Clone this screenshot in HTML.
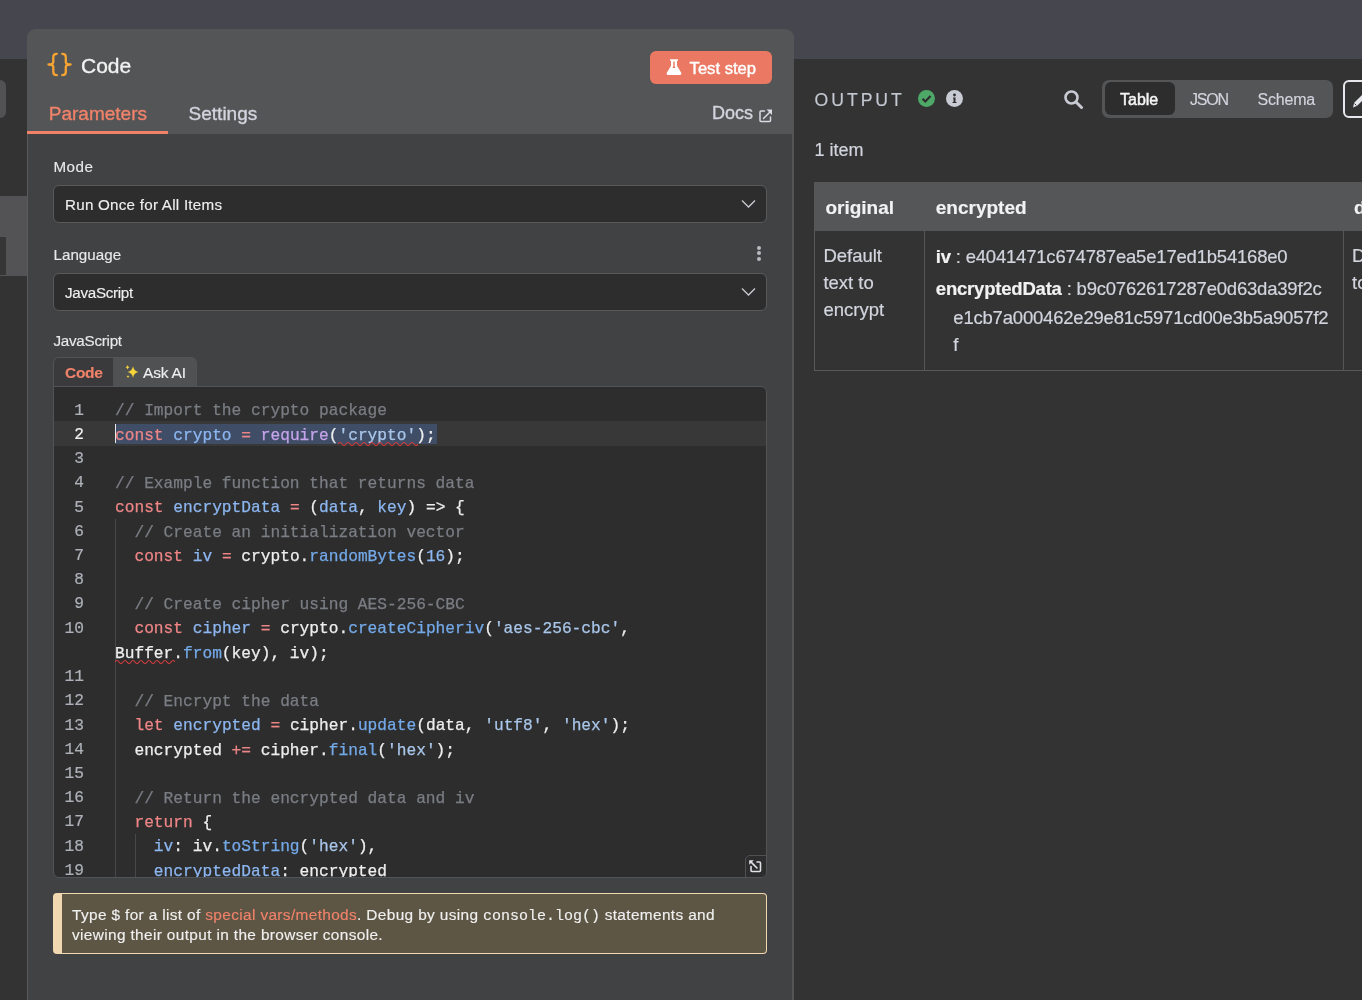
<!DOCTYPE html>
<html><head><meta charset="utf-8">
<style>
*{box-sizing:border-box;margin:0;padding:0}
html,body{width:1362px;height:1000px;overflow:hidden;background:#2e2e2e;font-family:"Liberation Sans",sans-serif;color:#e6e6e6;position:relative}
.a{position:absolute;white-space:nowrap;-webkit-text-stroke:0.15px currentColor}
</style></head><body>
<div id="root" style="position:absolute;left:0;top:0;width:1362px;height:1000px;will-change:transform"><div class="a" style="left:0px;top:0px;width:1362px;height:59px;background:#46464f;"></div>
<div class="a" style="left:0px;top:59px;width:27px;height:941px;background:#333333;"></div>
<div class="a" style="left:-10px;top:80px;width:16px;height:38px;background:#525254;border-radius:6px"></div>
<div class="a" style="left:0px;top:196px;width:27px;height:80px;background:#535355;"></div>
<div class="a" style="left:0px;top:237px;width:6px;height:38px;background:#363637;"></div>
<div class="a" style="left:794px;top:59px;width:568px;height:941px;background:#333333;"></div>
<div class="a" style="left:27px;top:29px;width:767px;height:990px;background:#414244;border-radius:9px 9px 0 0;border-left:1px solid #5a5b5d;border-right:2px solid #545557"></div>
<div class="a" style="left:27px;top:29px;width:767px;height:105px;background:#545557;border-radius:9px 9px 0 0"></div>
<svg class="a" style="left:44px;top:48px" width="32" height="32" viewBox="0 0 32 32"><path d="M12.8 5.8 C10 5.8 9.3 7 9.3 9 L9.3 14 C9.3 15.5 8 16.5 4.5 16.5 C8 16.5 9.3 17.5 9.3 19 L9.3 24 C9.3 26 10 27.2 12.8 27.2 M18.3 5.8 C21.1 5.8 21.8 7 21.8 9 L21.8 14 C21.8 15.5 23.1 16.5 26.6 16.5 C23.1 16.5 21.8 17.5 21.8 19 L21.8 24 C21.8 26 21.1 27.2 18.3 27.2" fill="none" stroke="#f7a432" stroke-width="2.3" stroke-linecap="round" stroke-linejoin="round"/></svg>
<div class="a" style="left:81px;top:51.42px;font-family:'Liberation Sans',sans-serif;font-size:21px;line-height:29px;color:#f2f2f2;font-weight:400;-webkit-text-stroke:0.2px currentColor;-webkit-text-stroke:0.35px currentColor">Code</div>
<div class="a" style="left:650px;top:51px;width:122px;height:33px;background:#ea7862;border-radius:6px"></div>
<svg class="a" style="left:666px;top:59px" width="16" height="17" viewBox="0 0 16 17"><path fill-rule="evenodd" d="M4 0.2 H12 V1.8 H11 V6.8 L15.2 13.8 C15.8 15 15.2 16 13.9 16 H2.1 C0.8 16 0.2 15 0.8 13.8 L5 6.8 V1.8 H4 Z M7.3 2.6 V7.6 L6.4 9 H9.6 L8.7 7.6 V2.6 Z" fill="#ffffff"/></svg>
<div class="a" style="left:689.6px;top:56.55px;font-family:'Liberation Sans',sans-serif;font-size:16.6px;line-height:23px;color:#ffffff;font-weight:400;-webkit-text-stroke:0.4px currentColor">Test step</div>
<div class="a" style="left:48.8px;top:99.52px;font-family:'Liberation Sans',sans-serif;font-size:19px;line-height:27px;color:#f0826a;font-weight:400;-webkit-text-stroke:0.2px currentColor;-webkit-text-stroke:0.35px currentColor">Parameters</div>
<div class="a" style="left:27px;top:131px;width:141px;height:3px;background:#f0826a;"></div>
<div class="a" style="left:188.6px;top:99.52px;font-family:'Liberation Sans',sans-serif;font-size:19px;line-height:27px;color:#d2d5de;font-weight:400;-webkit-text-stroke:0.2px currentColor;-webkit-text-stroke:0.35px currentColor">Settings</div>
<div class="a" style="left:712px;top:101.16px;font-family:'Liberation Sans',sans-serif;font-size:18px;line-height:25px;color:#d2d5de;font-weight:400;-webkit-text-stroke:0.2px currentColor;-webkit-text-stroke:0.35px currentColor">Docs</div>
<svg class="a" style="left:758px;top:108px" width="15" height="15" viewBox="0 0 15 15"><path d="M6.5 3 H3 Q2 3 2 4 V12.5 Q2 13.5 3 13.5 H11.5 Q12.5 13.5 12.5 12.5 V9" fill="none" stroke="#d8dbe3" stroke-width="1.5" stroke-linecap="round"/><path d="M5.5 10.5 L12.5 3.5" stroke="#d8dbe3" stroke-width="1.5" stroke-linecap="round"/><path d="M8.5 1.5 H14 V7 Z" fill="#d8dbe3"/></svg>
<div class="a" style="left:53.5px;top:155.63px;font-family:'Liberation Sans',sans-serif;font-size:15.2px;line-height:21px;color:#e8e8e8;font-weight:400;letter-spacing:0.45px">Mode</div>
<div class="a" style="left:53px;top:185px;width:714px;height:38px;background:#2d2d2e;border:1px solid #58595b;border-radius:6px"></div>
<div class="a" style="left:65px;top:193.63px;font-family:'Liberation Sans',sans-serif;font-size:15.2px;line-height:21px;color:#eeeeee;font-weight:400;letter-spacing:0.24px">Run Once for All Items</div>
<svg class="a" style="left:740px;top:198px" width="17" height="12" viewBox="0 0 17 12"><path d="M2 2.5 L8.5 9 L15 2.5" fill="none" stroke="#c8cad0" stroke-width="1.3"/></svg>
<div class="a" style="left:53.5px;top:243.93px;font-family:'Liberation Sans',sans-serif;font-size:15.2px;line-height:21px;color:#e8e8e8;font-weight:400;">Language</div>
<div class="a" style="left:757px;top:245.5px;width:4.4px;height:4.4px;background:#b8bac0;border-radius:50%"></div>
<div class="a" style="left:757px;top:251.0px;width:4.4px;height:4.4px;background:#b8bac0;border-radius:50%"></div>
<div class="a" style="left:757px;top:256.5px;width:4.4px;height:4.4px;background:#b8bac0;border-radius:50%"></div>
<div class="a" style="left:53px;top:273px;width:714px;height:38px;background:#2d2d2e;border:1px solid #58595b;border-radius:6px"></div>
<div class="a" style="left:65px;top:282.13px;font-family:'Liberation Sans',sans-serif;font-size:15.2px;line-height:21px;color:#eeeeee;font-weight:400;letter-spacing:-0.3px">JavaScript</div>
<svg class="a" style="left:740px;top:286px" width="17" height="12" viewBox="0 0 17 12"><path d="M2 2.5 L8.5 9 L15 2.5" fill="none" stroke="#c8cad0" stroke-width="1.3"/></svg>
<div class="a" style="left:53.5px;top:330.43px;font-family:'Liberation Sans',sans-serif;font-size:15.2px;line-height:21px;color:#e8e8e8;font-weight:400;letter-spacing:-0.26px">JavaScript</div>
<div class="a" style="left:53px;top:357px;width:144px;height:31px;background:#505153;border:1px solid #525355;border-bottom:none;border-radius:6px 6px 0 0"></div>
<div class="a" style="left:54px;top:358px;width:59px;height:29px;background:#3a3a3c;border-radius:5px 0 0 0"></div>
<div class="a" style="left:65px;top:362.23px;font-family:'Liberation Sans',sans-serif;font-size:15.5px;line-height:22px;color:#f0826a;font-weight:700;letter-spacing:-0.3px">Code</div>
<svg class="a" style="left:124px;top:364px" width="16" height="16" viewBox="0 0 16 16"><path d="M9 2 Q9.6 7 14.5 8 Q9.6 9 9 14 Q8.4 9 3.5 8 Q8.4 7 9 2Z" fill="#f5d33a"/><path d="M3.5 1 Q3.8 3 5.5 3.3 Q3.8 3.6 3.5 5.5 Q3.2 3.6 1.5 3.3 Q3.2 3 3.5 1Z" fill="#f5d33a"/><path d="M4 11 Q4.2 12.4 5.5 12.6 Q4.2 12.8 4 14.2 Q3.8 12.8 2.5 12.6 Q3.8 12.4 4 11Z" fill="#f5d33a"/></svg>
<div class="a" style="left:143px;top:362.23px;font-family:'Liberation Sans',sans-serif;font-size:15.5px;line-height:22px;color:#eeeeee;font-weight:400;letter-spacing:-0.2px">Ask AI</div>
<div class="a" style="left:53px;top:386px;width:714px;height:492px;background:#2d2d2e;border:1px solid #535456;border-radius:0 6px 6px 6px;overflow:hidden"></div>
<div class="a" style="left:54px;top:387px;width:712px;height:490px;overflow:hidden;border-radius:0 5px 5px 5px">
<div class="a" style="left:0px;top:34px;width:712px;height:25px;background:#383839;"></div>
<div class="a" style="left:61px;top:36.5px;width:322px;height:20.5px;background:#3f4d66;"></div>
<div class="a" style="left:60.5px;top:132px;width:1.5px;height:500px;background:#48484a;"></div>
<div class="a" style="left:80.5px;top:447px;width:1.5px;height:60px;background:#48484a;"></div>
<div class="a" style="left:20.28px;top:11.68px;font-family:'Liberation Mono',monospace;font-size:16.2px;line-height:24px;color:#aeb1b8;font-weight:400;-webkit-text-stroke:0.2px currentColor">1</div>
<div class="a" style="left:61px;top:12.48px;font-family:'Liberation Mono',monospace;font-size:16.2px;line-height:24px;color:#eeeeee;font-weight:400;white-space:pre;-webkit-text-stroke:0.25px currentColor"><span style="color:#7a7d83">// Import the crypto package</span></div>
<div class="a" style="left:20.28px;top:35.90px;font-family:'Liberation Mono',monospace;font-size:16.2px;line-height:24px;color:#f2f2f2;font-weight:400;-webkit-text-stroke:0.2px currentColor">2</div>
<div class="a" style="left:61px;top:36.70px;font-family:'Liberation Mono',monospace;font-size:16.2px;line-height:24px;color:#eeeeee;font-weight:400;white-space:pre;-webkit-text-stroke:0.25px currentColor"><span style="color:#ee8586">const</span><span style="color:#eeeeee"> </span><span style="color:#8cb6f0">crypto</span><span style="color:#eeeeee"> </span><span style="color:#ee8586">=</span><span style="color:#eeeeee"> </span><span style="color:#c5a3ea">require</span><span style="color:#eeeeee">(</span><span style="color:#a9c6ea">&#x27;crypto&#x27;</span><span style="color:#eeeeee">);</span></div>
<div class="a" style="left:20.28px;top:60.12px;font-family:'Liberation Mono',monospace;font-size:16.2px;line-height:24px;color:#aeb1b8;font-weight:400;-webkit-text-stroke:0.2px currentColor">3</div>
<div class="a" style="left:20.28px;top:84.34px;font-family:'Liberation Mono',monospace;font-size:16.2px;line-height:24px;color:#aeb1b8;font-weight:400;-webkit-text-stroke:0.2px currentColor">4</div>
<div class="a" style="left:61px;top:85.14px;font-family:'Liberation Mono',monospace;font-size:16.2px;line-height:24px;color:#eeeeee;font-weight:400;white-space:pre;-webkit-text-stroke:0.25px currentColor"><span style="color:#7a7d83">// Example function that returns data</span></div>
<div class="a" style="left:20.28px;top:108.56px;font-family:'Liberation Mono',monospace;font-size:16.2px;line-height:24px;color:#aeb1b8;font-weight:400;-webkit-text-stroke:0.2px currentColor">5</div>
<div class="a" style="left:61px;top:109.36px;font-family:'Liberation Mono',monospace;font-size:16.2px;line-height:24px;color:#eeeeee;font-weight:400;white-space:pre;-webkit-text-stroke:0.25px currentColor"><span style="color:#ee8586">const</span><span style="color:#eeeeee"> </span><span style="color:#8cb6f0">encryptData</span><span style="color:#eeeeee"> </span><span style="color:#ee8586">=</span><span style="color:#eeeeee"> (</span><span style="color:#8cb6f0">data</span><span style="color:#eeeeee">, </span><span style="color:#8cb6f0">key</span><span style="color:#eeeeee">) =&gt; {</span></div>
<div class="a" style="left:20.28px;top:132.78px;font-family:'Liberation Mono',monospace;font-size:16.2px;line-height:24px;color:#aeb1b8;font-weight:400;-webkit-text-stroke:0.2px currentColor">6</div>
<div class="a" style="left:61px;top:133.58px;font-family:'Liberation Mono',monospace;font-size:16.2px;line-height:24px;color:#eeeeee;font-weight:400;white-space:pre;-webkit-text-stroke:0.25px currentColor"><span style="color:#eeeeee">  </span><span style="color:#7a7d83">// Create an initialization vector</span></div>
<div class="a" style="left:20.28px;top:157.00px;font-family:'Liberation Mono',monospace;font-size:16.2px;line-height:24px;color:#aeb1b8;font-weight:400;-webkit-text-stroke:0.2px currentColor">7</div>
<div class="a" style="left:61px;top:157.80px;font-family:'Liberation Mono',monospace;font-size:16.2px;line-height:24px;color:#eeeeee;font-weight:400;white-space:pre;-webkit-text-stroke:0.25px currentColor"><span style="color:#eeeeee">  </span><span style="color:#ee8586">const</span><span style="color:#eeeeee"> </span><span style="color:#8cb6f0">iv</span><span style="color:#eeeeee"> </span><span style="color:#ee8586">=</span><span style="color:#eeeeee"> crypto.</span><span style="color:#74a9e8">randomBytes</span><span style="color:#eeeeee">(</span><span style="color:#8cb6f0">16</span><span style="color:#eeeeee">);</span></div>
<div class="a" style="left:20.28px;top:181.22px;font-family:'Liberation Mono',monospace;font-size:16.2px;line-height:24px;color:#aeb1b8;font-weight:400;-webkit-text-stroke:0.2px currentColor">8</div>
<div class="a" style="left:20.28px;top:205.44px;font-family:'Liberation Mono',monospace;font-size:16.2px;line-height:24px;color:#aeb1b8;font-weight:400;-webkit-text-stroke:0.2px currentColor">9</div>
<div class="a" style="left:61px;top:206.24px;font-family:'Liberation Mono',monospace;font-size:16.2px;line-height:24px;color:#eeeeee;font-weight:400;white-space:pre;-webkit-text-stroke:0.25px currentColor"><span style="color:#eeeeee">  </span><span style="color:#7a7d83">// Create cipher using AES-256-CBC</span></div>
<div class="a" style="left:10.560000000000002px;top:229.66px;font-family:'Liberation Mono',monospace;font-size:16.2px;line-height:24px;color:#aeb1b8;font-weight:400;-webkit-text-stroke:0.2px currentColor">10</div>
<div class="a" style="left:61px;top:230.46px;font-family:'Liberation Mono',monospace;font-size:16.2px;line-height:24px;color:#eeeeee;font-weight:400;white-space:pre;-webkit-text-stroke:0.25px currentColor"><span style="color:#eeeeee">  </span><span style="color:#ee8586">const</span><span style="color:#eeeeee"> </span><span style="color:#8cb6f0">cipher</span><span style="color:#eeeeee"> </span><span style="color:#ee8586">=</span><span style="color:#eeeeee"> crypto.</span><span style="color:#74a9e8">createCipheriv</span><span style="color:#eeeeee">(</span><span style="color:#a9c6ea">&#x27;aes-256-cbc&#x27;</span><span style="color:#eeeeee">,</span></div>
<div class="a" style="left:61px;top:254.68px;font-family:'Liberation Mono',monospace;font-size:16.2px;line-height:24px;color:#eeeeee;font-weight:400;white-space:pre;-webkit-text-stroke:0.25px currentColor"><span style="color:#eeeeee">Buffer.</span><span style="color:#74a9e8">from</span><span style="color:#eeeeee">(key), iv);</span></div>
<div class="a" style="left:10.560000000000002px;top:278.10px;font-family:'Liberation Mono',monospace;font-size:16.2px;line-height:24px;color:#aeb1b8;font-weight:400;-webkit-text-stroke:0.2px currentColor">11</div>
<div class="a" style="left:10.560000000000002px;top:302.32px;font-family:'Liberation Mono',monospace;font-size:16.2px;line-height:24px;color:#aeb1b8;font-weight:400;-webkit-text-stroke:0.2px currentColor">12</div>
<div class="a" style="left:61px;top:303.12px;font-family:'Liberation Mono',monospace;font-size:16.2px;line-height:24px;color:#eeeeee;font-weight:400;white-space:pre;-webkit-text-stroke:0.25px currentColor"><span style="color:#eeeeee">  </span><span style="color:#7a7d83">// Encrypt the data</span></div>
<div class="a" style="left:10.560000000000002px;top:326.54px;font-family:'Liberation Mono',monospace;font-size:16.2px;line-height:24px;color:#aeb1b8;font-weight:400;-webkit-text-stroke:0.2px currentColor">13</div>
<div class="a" style="left:61px;top:327.34px;font-family:'Liberation Mono',monospace;font-size:16.2px;line-height:24px;color:#eeeeee;font-weight:400;white-space:pre;-webkit-text-stroke:0.25px currentColor"><span style="color:#eeeeee">  </span><span style="color:#ee8586">let</span><span style="color:#eeeeee"> </span><span style="color:#8cb6f0">encrypted</span><span style="color:#eeeeee"> </span><span style="color:#ee8586">=</span><span style="color:#eeeeee"> cipher.</span><span style="color:#74a9e8">update</span><span style="color:#eeeeee">(data, </span><span style="color:#a9c6ea">&#x27;utf8&#x27;</span><span style="color:#eeeeee">, </span><span style="color:#a9c6ea">&#x27;hex&#x27;</span><span style="color:#eeeeee">);</span></div>
<div class="a" style="left:10.560000000000002px;top:350.76px;font-family:'Liberation Mono',monospace;font-size:16.2px;line-height:24px;color:#aeb1b8;font-weight:400;-webkit-text-stroke:0.2px currentColor">14</div>
<div class="a" style="left:61px;top:351.56px;font-family:'Liberation Mono',monospace;font-size:16.2px;line-height:24px;color:#eeeeee;font-weight:400;white-space:pre;-webkit-text-stroke:0.25px currentColor"><span style="color:#eeeeee">  encrypted </span><span style="color:#ee8586">+=</span><span style="color:#eeeeee"> cipher.</span><span style="color:#74a9e8">final</span><span style="color:#eeeeee">(</span><span style="color:#a9c6ea">&#x27;hex&#x27;</span><span style="color:#eeeeee">);</span></div>
<div class="a" style="left:10.560000000000002px;top:374.98px;font-family:'Liberation Mono',monospace;font-size:16.2px;line-height:24px;color:#aeb1b8;font-weight:400;-webkit-text-stroke:0.2px currentColor">15</div>
<div class="a" style="left:10.560000000000002px;top:399.20px;font-family:'Liberation Mono',monospace;font-size:16.2px;line-height:24px;color:#aeb1b8;font-weight:400;-webkit-text-stroke:0.2px currentColor">16</div>
<div class="a" style="left:61px;top:400.00px;font-family:'Liberation Mono',monospace;font-size:16.2px;line-height:24px;color:#eeeeee;font-weight:400;white-space:pre;-webkit-text-stroke:0.25px currentColor"><span style="color:#eeeeee">  </span><span style="color:#7a7d83">// Return the encrypted data and iv</span></div>
<div class="a" style="left:10.560000000000002px;top:423.42px;font-family:'Liberation Mono',monospace;font-size:16.2px;line-height:24px;color:#aeb1b8;font-weight:400;-webkit-text-stroke:0.2px currentColor">17</div>
<div class="a" style="left:61px;top:424.22px;font-family:'Liberation Mono',monospace;font-size:16.2px;line-height:24px;color:#eeeeee;font-weight:400;white-space:pre;-webkit-text-stroke:0.25px currentColor"><span style="color:#eeeeee">  </span><span style="color:#ee8586">return</span><span style="color:#eeeeee"> {</span></div>
<div class="a" style="left:10.560000000000002px;top:447.64px;font-family:'Liberation Mono',monospace;font-size:16.2px;line-height:24px;color:#aeb1b8;font-weight:400;-webkit-text-stroke:0.2px currentColor">18</div>
<div class="a" style="left:61px;top:448.44px;font-family:'Liberation Mono',monospace;font-size:16.2px;line-height:24px;color:#eeeeee;font-weight:400;white-space:pre;-webkit-text-stroke:0.25px currentColor"><span style="color:#eeeeee">    </span><span style="color:#8cb6f0">iv</span><span style="color:#eeeeee">: iv.</span><span style="color:#74a9e8">toString</span><span style="color:#eeeeee">(</span><span style="color:#a9c6ea">&#x27;hex&#x27;</span><span style="color:#eeeeee">),</span></div>
<div class="a" style="left:10.560000000000002px;top:471.86px;font-family:'Liberation Mono',monospace;font-size:16.2px;line-height:24px;color:#aeb1b8;font-weight:400;-webkit-text-stroke:0.2px currentColor">19</div>
<div class="a" style="left:61px;top:472.66px;font-family:'Liberation Mono',monospace;font-size:16.2px;line-height:24px;color:#eeeeee;font-weight:400;white-space:pre;-webkit-text-stroke:0.25px currentColor"><span style="color:#eeeeee">    </span><span style="color:#8cb6f0">encryptedData</span><span style="color:#eeeeee">: encrypted</span></div>
<div class="a" style="left:60.5px;top:37px;width:1.5px;height:19px;background:#e8e8e8;"></div>
<svg class="a" style="left:284px;top:54px" width="80" height="5" viewBox="0 0 80 5"><path d="M0 3 Q2 0 4 3 T8 3 T12 3 T16 3 T20 3 T24 3 T28 3 T32 3 T36 3 T40 3 T44 3 T48 3 T52 3 T56 3 T60 3 T64 3 T68 3 T72 3 T76 3 T80 3" fill="none" stroke="#d23c3c" stroke-width="1.2"/></svg>
<svg class="a" style="left:61px;top:272px" width="60" height="5" viewBox="0 0 60 5"><path d="M0 3 Q2 0 4 3 T8 3 T12 3 T16 3 T20 3 T24 3 T28 3 T32 3 T36 3 T40 3 T44 3 T48 3 T52 3 T56 3 T60 3" fill="none" stroke="#d23c3c" stroke-width="1.2"/></svg>
<div class="a" style="left:690.5px;top:467.5px;width:30px;height:30px;background:#2d2d2e;border:1.5px solid #505153;border-radius:5px"></div>
<svg class="a" style="left:694px;top:472px" width="14" height="14" viewBox="0 0 14 14"><path d="M3 7.5 V11.5 Q3 12.5 4 12.5 H11.5 Q12.5 12.5 12.5 11.5 V4 Q12.5 3 11.5 3 H9" fill="none" stroke="#dfe1e6" stroke-width="1.6" stroke-linecap="round"/><path d="M2.5 2.5 L9 9" stroke="#dfe1e6" stroke-width="1.6" stroke-linecap="round"/><path d="M1.2 1.2 H5.8 L1.2 5.8 Z" fill="#dfe1e6"/></svg>
</div>
<div class="a" style="left:53px;top:893px;width:714px;height:61px;background:#5e5645;border:1px solid #f0d9b0;border-left:9px solid #f0d9b0;border-radius:4px"></div>
<div class="a" style="left:72px;top:905.6px;width:700px;font-size:15.4px;line-height:18.7px;letter-spacing:0.36px;color:#f0f0f0">Type $ for a list of <span style="color:#f0826a">special vars/methods</span>. Debug by using <span style="font-family:'Liberation Mono',monospace;font-size:15px;letter-spacing:0">console.log()</span> statements and<br>viewing their output in the browser console.</div>
<div class="a" style="left:814.5px;top:87.80px;font-family:'Liberation Sans',sans-serif;font-size:17.6px;line-height:25px;color:#c4c8d1;font-weight:400;letter-spacing:3px">OUTPUT</div>
<svg class="a" style="left:918px;top:90px" width="17" height="17" viewBox="0 0 17 17"><circle cx="8.5" cy="8.5" r="8.5" fill="#4ea868"/><path d="M4.5 8.8 L7.3 11.5 L12.5 6" fill="none" stroke="#2e2e2e" stroke-width="2.2"/></svg>
<svg class="a" style="left:946px;top:90px" width="17" height="17" viewBox="0 0 17 17"><circle cx="8.5" cy="8.5" r="8.5" fill="#c8cbd3"/><circle cx="8.5" cy="5" r="1.4" fill="#2e2e2e"/><path d="M7 7.5 H9.5 V12 H10.5 V13 H6.5 V12 H7.5 V8.5 H7 Z" fill="#2e2e2e"/></svg>
<svg class="a" style="left:1063px;top:89px" width="21" height="20" viewBox="0 0 21 20"><circle cx="8.5" cy="8.5" r="6" fill="none" stroke="#c8cbd3" stroke-width="2.6"/><path d="M13 13 L18.5 18.5" stroke="#c8cbd3" stroke-width="3" stroke-linecap="round"/></svg>
<div class="a" style="left:1102px;top:80px;width:231px;height:38px;background:#545557;border-radius:7px"></div>
<div class="a" style="left:1105px;top:82px;width:70px;height:33px;background:#2d2d2e;border-radius:6px"></div>
<div class="a" style="left:1120px;top:88.56px;font-family:'Liberation Sans',sans-serif;font-size:16px;line-height:22px;color:#f6f6f6;font-weight:400;letter-spacing:0px;-webkit-text-stroke:0.45px #f6f6f6">Table</div>
<div class="a" style="left:1190px;top:88.56px;font-family:'Liberation Sans',sans-serif;font-size:16px;line-height:22px;color:#d2d5de;font-weight:400;letter-spacing:-1.2px">JSON</div>
<div class="a" style="left:1257.5px;top:88.56px;font-family:'Liberation Sans',sans-serif;font-size:16px;line-height:22px;color:#d2d5de;font-weight:400;letter-spacing:-0.2px">Schema</div>
<div class="a" style="left:1343px;top:80px;width:40px;height:38px;background:transparent;border:2px solid #e6e7ec;border-radius:6px"></div>
<svg class="a" style="left:1350px;top:90px" width="16" height="20" viewBox="0 0 16 20"><path d="M3 17.5 L4.2 12.8 L13 4 L16 7 L7.2 15.8 Z" fill="#e6e7ec"/><path d="M4.6 13.6 L6.4 15.4" stroke="#333" stroke-width="1"/></svg>
<div class="a" style="left:814.5px;top:138.26px;font-family:'Liberation Sans',sans-serif;font-size:18px;line-height:25px;color:#d2d5de;font-weight:400;-webkit-text-stroke:0.2px currentColor;">1 item</div>
<div class="a" style="left:814px;top:182px;width:560px;height:49px;background:#555658;"></div>
<div class="a" style="left:814px;top:231px;width:560px;height:140px;background:#333333;border:1px solid #58595b;border-top:none"></div>
<div class="a" style="left:924px;top:231px;width:1px;height:140px;background:#555658;"></div>
<div class="a" style="left:1343px;top:231px;width:1px;height:140px;background:#555658;"></div>
<div class="a" style="left:825.4px;top:194.42px;font-family:'Liberation Sans',sans-serif;font-size:19px;line-height:27px;color:#f2f2f2;font-weight:700;">original</div>
<div class="a" style="left:935.8px;top:194.42px;font-family:'Liberation Sans',sans-serif;font-size:19px;line-height:27px;color:#f2f2f2;font-weight:700;">encrypted</div>
<div class="a" style="left:1354px;top:194.42px;font-family:'Liberation Sans',sans-serif;font-size:19px;line-height:27px;color:#f2f2f2;font-weight:700;">decrypted</div>
<div class="a" style="left:823.4px;top:243.39px;font-family:'Liberation Sans',sans-serif;font-size:18.5px;line-height:26px;color:#d2d5de;font-weight:400;-webkit-text-stroke:0.2px currentColor;">Default</div>
<div class="a" style="left:823.4px;top:269.69px;font-family:'Liberation Sans',sans-serif;font-size:18.5px;line-height:26px;color:#d2d5de;font-weight:400;-webkit-text-stroke:0.2px currentColor;">text to</div>
<div class="a" style="left:823.4px;top:296.89px;font-family:'Liberation Sans',sans-serif;font-size:18.5px;line-height:26px;color:#d2d5de;font-weight:400;-webkit-text-stroke:0.2px currentColor;">encrypt</div>
<div class="a" style="left:1352px;top:243.39px;font-family:'Liberation Sans',sans-serif;font-size:18.5px;line-height:26px;color:#d2d5de;font-weight:400;-webkit-text-stroke:0.2px currentColor;">Default</div>
<div class="a" style="left:1352px;top:269.69px;font-family:'Liberation Sans',sans-serif;font-size:18.5px;line-height:26px;color:#d2d5de;font-weight:400;-webkit-text-stroke:0.2px currentColor;">to</div>
<div class="a" style="left:935.8px;top:0;"></div>
<div class="a" style="left:935.8px;top:244.49px;font-family:'Liberation Sans',sans-serif;font-size:18.5px;line-height:26px;color:#d2d5de;font-weight:400;-webkit-text-stroke:0.2px currentColor;letter-spacing:-0.2px"><b style="color:#f2f2f2">iv</b> : e4041471c674787ea5e17ed1b54168e0</div>
<div class="a" style="left:935.8px;top:276.19px;font-family:'Liberation Sans',sans-serif;font-size:18.5px;line-height:26px;color:#d2d5de;font-weight:400;-webkit-text-stroke:0.2px currentColor;letter-spacing:-0.2px"><b style="color:#f2f2f2">encryptedData</b> : b9c0762617287e0d63da39f2c</div>
<div class="a" style="left:953.3px;top:305.19px;font-family:'Liberation Sans',sans-serif;font-size:18.5px;line-height:26px;color:#d2d5de;font-weight:400;-webkit-text-stroke:0.2px currentColor;letter-spacing:-0.2px">e1cb7a000462e29e81c5971cd00e3b5a9057f2</div>
<div class="a" style="left:953.3px;top:331.79px;font-family:'Liberation Sans',sans-serif;font-size:18.5px;line-height:26px;color:#d2d5de;font-weight:400;-webkit-text-stroke:0.2px currentColor;">f</div>
</div></body></html>
